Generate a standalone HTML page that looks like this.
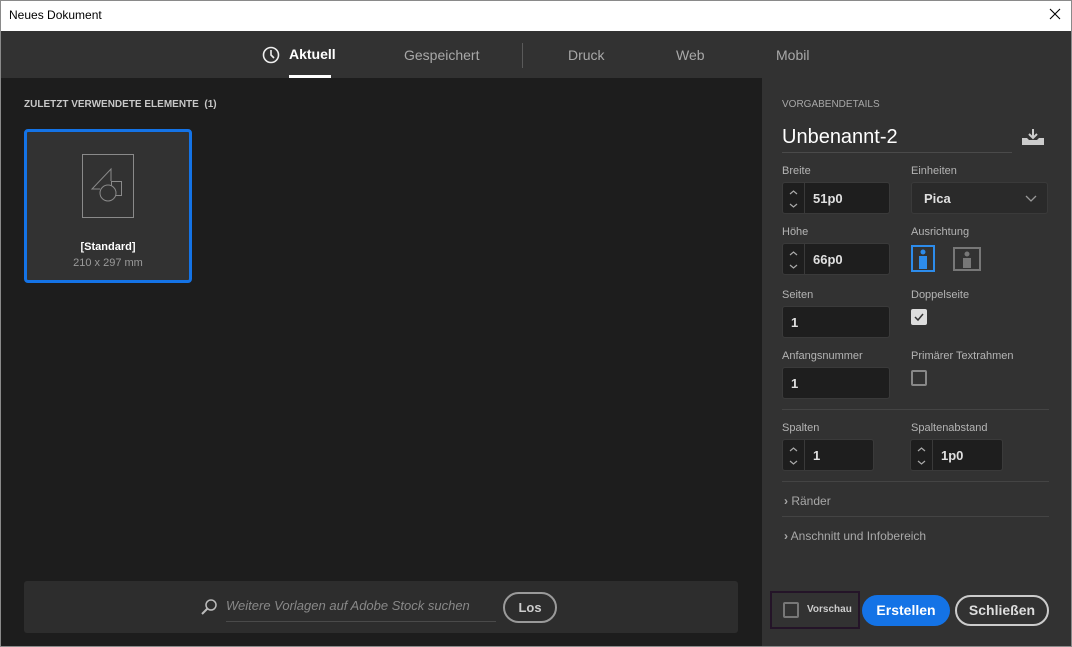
<!DOCTYPE html>
<html><head><meta charset="utf-8"><style>
*{margin:0;padding:0;box-sizing:border-box}
body{width:1072px;height:647px;position:relative;overflow:hidden;background:#1d1d1d;font-family:"Liberation Sans",sans-serif;}
.a{position:absolute}
.lbl{position:absolute;color:#b4b4b4;font-size:11px}
.inp{position:absolute;background:#1e1e1e;border:1px solid #3a3a3a;border-radius:3px;color:#e0e0e0;font-size:13px;font-weight:bold}
.spin{position:absolute;left:0;top:0;bottom:0;width:22px;border-right:1px solid #3a3a3a}
.spin svg{position:absolute;left:5px}
.sep{position:absolute;left:782px;width:267px;height:1px;background:#444}
</style></head><body>
<div class="a" style="left:0;top:0;width:1072px;height:647px;border:1px solid #8a8a8a;z-index:9;pointer-events:none"></div>
<div class="a" style="left:0;top:0;width:1072px;height:31px;background:#fff"></div>
<div class="a" style="left:9px;top:8px;font-size:12px;color:#000">Neues Dokument</div>
<svg class="a" style="left:1049px;top:8px" width="12" height="12"><path d="M1 1L11 11M11 1L1 11" stroke="#000" stroke-width="1.1"/></svg>
<div class="a" style="left:1px;top:31px;width:1070px;height:47px;background:#323232"></div>
<svg class="a" style="left:262px;top:46px" width="18" height="18"><circle cx="9" cy="9" r="7.5" fill="none" stroke="#eee" stroke-width="1.6"/><path d="M9 4V9L12 12" fill="none" stroke="#eee" stroke-width="1.6"/></svg>
<div class="a" style="left:289px;top:46px;color:#fff;font-size:14px;font-weight:bold">Aktuell</div>
<div class="a" style="left:289px;top:75px;width:42px;height:3px;background:#fff"></div>
<div class="a" style="left:404px;top:47px;color:#a8a8a8;font-size:14px">Gespeichert</div>
<div class="a" style="left:522px;top:43px;width:1px;height:25px;background:#5a5a5a"></div>
<div class="a" style="left:568px;top:47px;color:#a8a8a8;font-size:14px">Druck</div>
<div class="a" style="left:676px;top:47px;color:#a8a8a8;font-size:14px">Web</div>
<div class="a" style="left:776px;top:47px;color:#a8a8a8;font-size:14px">Mobil</div>
<div class="a" style="left:24px;top:99px;color:#c8c8c8;font-size:10px;font-weight:bold">ZULETZT VERWENDETE ELEMENTE &nbsp;(1)</div>
<div class="a" style="left:24px;top:129px;width:168px;height:154px;background:#323232;border:3px solid #1473e6;border-radius:4px"></div>
<svg class="a" style="left:82px;top:154px" width="52" height="64"><rect x="0.5" y="0.5" width="51" height="63" fill="none" stroke="#8a8a8a"/><path d="M18 35H10L29 15V27" fill="none" stroke="#8a8a8a"/><rect x="29.5" y="27.5" width="10" height="14" fill="none" stroke="#8a8a8a"/><circle cx="26" cy="39" r="8" fill="#323232" stroke="#8a8a8a"/></svg>
<div class="a" style="left:24px;top:241px;width:168px;text-align:center;color:#fff;font-size:11px;font-weight:bold">[Standard]</div>
<div class="a" style="left:24px;top:257px;width:168px;text-align:center;color:#9a9a9a;font-size:11px">210 x 297 mm</div>
<div class="a" style="left:24px;top:581px;width:714px;height:52px;background:#2d2d2d;border-radius:3px"></div>
<svg class="a" style="left:200px;top:598px" width="18" height="18"><circle cx="11" cy="7" r="5" fill="none" stroke="#bbb" stroke-width="1.5"/><path d="M7.5 10.5L2 16" stroke="#bbb" stroke-width="2"/></svg>
<div class="a" style="left:226px;top:598px;color:#888;font-size:13px;font-style:italic">Weitere Vorlagen auf Adobe Stock suchen</div>
<div class="a" style="left:226px;top:621px;width:270px;height:1px;background:#4a4a4a"></div>
<div class="a" style="left:503px;top:592px;width:54px;height:31px;border:2px solid #9a9a9a;border-radius:16px;color:#ccc;font-size:13px;font-weight:bold;text-align:center;line-height:27px">Los</div>
<div class="a" style="left:762px;top:78px;width:309px;height:568px;background:#323232"></div>
<div class="a" style="left:782px;top:99px;color:#a8a8a8;font-size:10px">VORGABENDETAILS</div>
<div class="a" style="left:782px;top:126px;color:#fff;font-size:20px">Unbenannt-2</div>
<div class="a" style="left:782px;top:152px;width:230px;height:1px;background:#4a4a4a"></div>
<svg class="a" style="left:1021px;top:128px" width="24" height="18"><path d="M12 1V9M8 6L12 10L16 6" fill="none" stroke="#ccc" stroke-width="2"/><path d="M1 10H6L8 12H16L18 10H23V17H1Z" fill="#ccc"/></svg>
<div class="lbl" style="left:782px;top:165px">Breite</div>
<div class="lbl" style="left:911px;top:165px">Einheiten</div>
<div class="inp" style="left:782px;top:182px;width:108px;height:32px"><div class="spin"><svg style="top:5px" width="11" height="22"><path d="M2 6L5.5 3L9 6M2 16L5.5 19L9 16" fill="none" stroke="#aaa" stroke-width="1.2"/></svg></div><span class="a" style="left:30px;top:8px">51p0</span></div>
<div class="inp" style="left:911px;top:182px;width:137px;height:32px;background:#2a2a2a"><span class="a" style="left:12px;top:8px">Pica</span><svg class="a" style="left:113px;top:12px" width="12" height="8"><path d="M1 1L6 6L11 1" fill="none" stroke="#999" stroke-width="1.3"/></svg></div>
<div class="lbl" style="left:782px;top:226px">Höhe</div>
<div class="lbl" style="left:911px;top:226px">Ausrichtung</div>
<div class="inp" style="left:782px;top:243px;width:108px;height:32px"><div class="spin"><svg style="top:5px" width="11" height="22"><path d="M2 6L5.5 3L9 6M2 16L5.5 19L9 16" fill="none" stroke="#aaa" stroke-width="1.2"/></svg></div><span class="a" style="left:30px;top:8px">66p0</span></div>
<svg class="a" style="left:911px;top:245px" width="24" height="27"><rect x="1" y="1" width="22" height="25" fill="none" stroke="#2d8ceb" stroke-width="2"/><circle cx="12" cy="7" r="2.5" fill="#2d8ceb"/><path d="M8 11H16V24H8Z" fill="#2d8ceb"/></svg>
<svg class="a" style="left:953px;top:247px" width="28" height="24"><rect x="1" y="1" width="26" height="22" fill="none" stroke="#777" stroke-width="2"/><circle cx="14" cy="7" r="2.5" fill="#777"/><path d="M10 11H18V21H10Z" fill="#777"/></svg>
<div class="lbl" style="left:782px;top:289px">Seiten</div>
<div class="lbl" style="left:911px;top:289px">Doppelseite</div>
<div class="inp" style="left:782px;top:306px;width:108px;height:32px"><span class="a" style="left:8px;top:8px">1</span></div>
<div class="a" style="left:911px;top:309px;width:16px;height:16px;background:#ddd;border-radius:2px"></div>
<svg class="a" style="left:911px;top:309px" width="16" height="16"><path d="M4 8L7 11L12 5" fill="none" stroke="#333" stroke-width="1.5"/></svg>
<div class="lbl" style="left:782px;top:350px">Anfangsnummer</div>
<div class="lbl" style="left:911px;top:350px">Primärer Textrahmen</div>
<div class="inp" style="left:782px;top:367px;width:108px;height:32px"><span class="a" style="left:8px;top:8px">1</span></div>
<div class="a" style="left:911px;top:370px;width:16px;height:16px;border:2px solid #888;border-radius:2px"></div>
<div class="sep" style="top:409px"></div>
<div class="lbl" style="left:782px;top:422px">Spalten</div>
<div class="lbl" style="left:911px;top:422px">Spaltenabstand</div>
<div class="inp" style="left:782px;top:439px;width:92px;height:32px"><div class="spin"><svg style="top:5px" width="11" height="22"><path d="M2 6L5.5 3L9 6M2 16L5.5 19L9 16" fill="none" stroke="#aaa" stroke-width="1.2"/></svg></div><span class="a" style="left:30px;top:8px">1</span></div>
<div class="inp" style="left:910px;top:439px;width:93px;height:32px"><div class="spin"><svg style="top:5px" width="11" height="22"><path d="M2 6L5.5 3L9 6M2 16L5.5 19L9 16" fill="none" stroke="#aaa" stroke-width="1.2"/></svg></div><span class="a" style="left:30px;top:8px">1p0</span></div>
<div class="sep" style="top:481px"></div>
<div class="a" style="left:784px;top:494px;color:#a8a8a8;font-size:12px"><b>›</b> Ränder</div>
<div class="sep" style="top:516px"></div>
<div class="a" style="left:784px;top:529px;color:#a8a8a8;font-size:12px"><b>›</b> Anschnitt und Infobereich</div>
<div class="a" style="left:770px;top:591px;width:90px;height:38px;border:2px solid #241428"></div>
<div class="a" style="left:783px;top:602px;width:16px;height:16px;border:2px solid #777;border-radius:2px"></div>
<div class="a" style="left:807px;top:604px;color:#ccc;font-size:10px;font-weight:bold">Vorschau</div>
<div class="a" style="left:862px;top:595px;width:88px;height:31px;background:#1473e6;border-radius:16px;color:#fff;font-size:14px;font-weight:bold;text-align:center;line-height:31px">Erstellen</div>
<div class="a" style="left:955px;top:595px;width:94px;height:31px;border:2px solid #ccc;border-radius:16px;color:#ddd;font-size:14px;font-weight:bold;text-align:center;line-height:27px">Schließen</div>
</body></html>
